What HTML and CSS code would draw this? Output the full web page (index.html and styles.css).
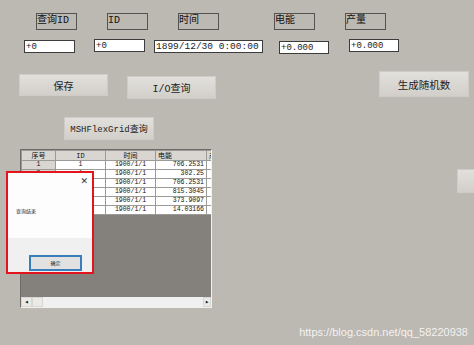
FILE: index.html
```html
<!DOCTYPE html>
<html lang="zh-CN">
  <head>
    <meta charset="UTF-8" />
    <title>MSHFlexGrid查询</title>
    <link rel="stylesheet" href="styles.css">
  </head>
  <body>
    <div class="form">
      <div class="row row-labels">
        <div class="field-label">查询ID</div>
        <div class="field-label">ID</div>
        <div class="field-label">时间</div>
        <div class="field-label">电能</div>
        <div class="field-label">产量</div>
      </div>

      <div class="row row-inputs">
        <input class="field" type="text" value="+0" />
        <input class="field" type="text" value="+0" />
        <input class="field field-wide" type="text" value="1899/12/30 0:00:00" />
        <input class="field" type="text" value="+0.000" />
        <input class="field" type="text" value="+0.000" />
      </div>

      <div class="row row-buttons">
        <button class="btn btn-save">保存</button>
        <button class="btn btn-io">I/O查询</button>
        <button class="btn btn-random">生成随机数</button>
      </div>

      <div class="row row-grid-btn">
        <button class="btn btn-grid">MSHFlexGrid查询</button>
      </div>

      <div class="row row-grid">
        <div class="grid">
          <table class="grid-table">
            <colgroup>
              <col class="c1" /><col class="c2" /><col class="c3" /><col class="c4" /><col class="c5" />
            </colgroup>
            <thead>
              <tr>
                <th>序号</th>
                <th>ID</th>
                <th>时间</th>
                <th class="left">电能</th>
                <th class="left">产量</th>
              </tr>
            </thead>
            <tbody>
              <tr><td class="fixed">1</td><td>1</td><td>1900/1/1</td><td class="num">706.2531</td><td></td></tr>
              <tr><td class="fixed">2</td><td>1</td><td>1900/1/1</td><td class="num">302.25</td><td></td></tr>
              <tr><td class="fixed">3</td><td>1</td><td>1900/1/1</td><td class="num">706.2531</td><td></td></tr>
              <tr><td class="fixed">4</td><td>1</td><td>1900/1/1</td><td class="num">815.3045</td><td></td></tr>
              <tr><td class="fixed">5</td><td>1</td><td>1900/1/1</td><td class="num">373.9097</td><td></td></tr>
              <tr><td class="fixed">6</td><td>1</td><td>1900/1/1</td><td class="num">14.03166</td><td></td></tr>
            </tbody>
          </table>
          <div class="grid-empty"></div>
          <div class="hscroll">
            <div class="sb-btn">&#9666;</div>
            <div class="sb-thumb"></div>
            <div class="sb-track"></div>
            <div class="sb-btn">&#9656;</div>
          </div>
        </div>
        <button class="btn btn-edge"></button>
      </div>

      <div class="msgbox">
        <div class="msgbox-body">
          <div class="msgbox-close">✕</div>
          <div class="msgbox-text">查询结束</div>
        </div>
        <div class="msgbox-footer">
          <button class="msgbox-ok">确定</button>
        </div>
      </div>

      <div class="watermark">https://blog.csdn.net/qq_58220938</div>
    </div>
  </body>
</html>
```

FILE: styles.css
```css
body {
  margin: 0;
  background-color: #bcb8b2;
  font-family: "Liberation Mono", "Noto Sans CJK SC", monospace;
  overflow: hidden;
}
.form {
  position: relative;
  width: 474px;
  height: 345px;
  overflow: hidden;
}
.row {
  display: flex;
  align-items: flex-start;
}
.row-labels {
  padding-top: 13px;
  padding-left: 36px;
  gap: 30px;
}
.row-labels .field-label:nth-child(4) {
  margin-left: 25px;
}
.field-label {
  box-sizing: border-box;
  width: 41px;
  height: 17px;
  border: 1px solid #55534f;
  font-size: 10px;
  line-height: 14px;
  color: #111;
  white-space: nowrap;
  overflow: hidden;
}
.row-inputs {
  margin-top: 10px;
  padding-left: 24px;
}
.field {
  box-sizing: border-box;
  width: 51px;
  height: 13px;
  margin: 0;
  padding: 0 1px;
  border: 1px solid #3c3c3c;
  background: #fff;
  font-family: "Liberation Mono", "Noto Sans CJK SC", monospace;
  font-size: 9px;
  color: #222;
  outline: none;
}
.row-inputs .field:nth-child(2) { margin-left: 19px; margin-top: -1px; }
.row-inputs .field:nth-child(3) { margin-left: 9px; }
.row-inputs .field:nth-child(4) { margin-left: 16px; width: 50px; margin-top: 1px; }
.row-inputs .field:nth-child(5) { margin-left: 20px; width: 50px; margin-top: -1px; }
.field-wide {
  width: 109px;
  font-size: 9.5px;
}
.btn {
  box-sizing: border-box;
  margin: 0;
  padding: 0;
  border: 1px solid #cfccc7;
  background: linear-gradient(#e2e0dc, #d2cfca);
  font-family: "Liberation Mono", "Noto Sans CJK SC", monospace;
  font-size: 10px;
  color: #222;
  flex-shrink: 0;
}
.row-buttons {
  margin-top: 17px;
  padding-left: 19px;
}
.btn-save {
  width: 89px;
  height: 22px;
  margin-top: 3px;
}
.btn-io {
  width: 89px;
  height: 23px;
  margin-top: 5px;
  margin-left: 19px;
}
.btn-random {
  width: 90px;
  height: 26px;
  margin-left: 163px;
  font-size: 10.5px;
}
.row-grid-btn {
  margin-top: 18px;
  padding-left: 64px;
}
.btn-grid {
  width: 90px;
  height: 23px;
  font-size: 9px;
}
.row-grid {
  margin-top: 9px;
  padding-left: 20px;
}
.btn-edge {
  width: 30px;
  height: 24px;
  margin-top: 20px;
  margin-left: 245px;
}
.grid {
  box-sizing: border-box;
  flex-shrink: 0;
  width: 192px;
  height: 159px;
  border: 1px solid;
  border-color: #6e6b66 #f2f1ee #f2f1ee #6e6b66;
  background: #84817c;
  display: flex;
  flex-direction: column;
  overflow: hidden;
}
.grid-table {
  border-collapse: collapse;
  table-layout: fixed;
  width: 220px;
  font-size: 6.5px;
  color: #111;
}
.c1 { width: 34px; }
.c2 { width: 50px; }
.c3 { width: 50px; }
.c4 { width: 51px; }
.c5 { width: 35px; }
.grid-table th,
.grid-table td {
  padding: 0 2px;
  border: 1px solid #9c9a96;
  white-space: nowrap;
  overflow: hidden;
  text-align: center;
}
.grid-table th {
  height: 9px;
  background: #d9d6d1;
  font-weight: normal;
  font-size: 7px;
  line-height: 8px;
}
.grid-table td {
  height: 8px;
  line-height: 8px;
  background: #fff;
}
.grid-table td.fixed {
  background: #d9d6d1;
}
.grid-table .left {
  text-align: left;
}
.grid-table .num {
  text-align: right;
}
.grid-empty {
  flex: 1;
}
.hscroll {
  display: flex;
  height: 10px;
  background: #f0f0f0;
}
.sb-btn,
.sb-thumb {
  box-sizing: border-box;
  width: 11px;
  height: 10px;
  border: 1px solid #d8d6d2;
  background: #ebeae7;
  font-size: 7px;
  line-height: 8px;
  text-align: center;
  color: #222;
}
.sb-btn:last-child {
  width: 8px;
}
.sb-track {
  flex: 1;
}
.msgbox {
  position: absolute;
  left: 6px;
  top: 171px;
  width: 88px;
  height: 103px;
  box-sizing: border-box;
  border: 2px solid #e3141c;
  background: #fdfdfd;
  display: flex;
  flex-direction: column;
  font-family: "Noto Sans CJK SC", sans-serif;
}
.msgbox-body {
  position: relative;
  flex: 1;
}
.msgbox-close {
  position: absolute;
  right: 4px;
  top: 3px;
  font-family: "DejaVu Sans", sans-serif;
  font-size: 9px;
  color: #333;
}
.msgbox-text {
  padding: 34px 0 0 8px;
  font-size: 5px;
  color: #222;
}
.msgbox-footer {
  height: 34px;
  background: #f0f0f0;
  padding-left: 21px;
  padding-top: 8px;
  box-sizing: border-box;
}
.msgbox-ok {
  box-sizing: border-box;
  width: 53px;
  height: 16px;
  margin: 0;
  padding: 0;
  border: 2px solid #3a7dbd;
  background: #e1e1e1;
  font-family: "Noto Sans CJK SC", sans-serif;
  font-size: 5px;
  color: #222;
}
.watermark {
  position: absolute;
  right: 6px;
  bottom: 7px;
  font-family: "Liberation Sans", Arial, sans-serif;
  font-size: 11px;
  color: rgba(255, 255, 255, 0.85);
}
```
